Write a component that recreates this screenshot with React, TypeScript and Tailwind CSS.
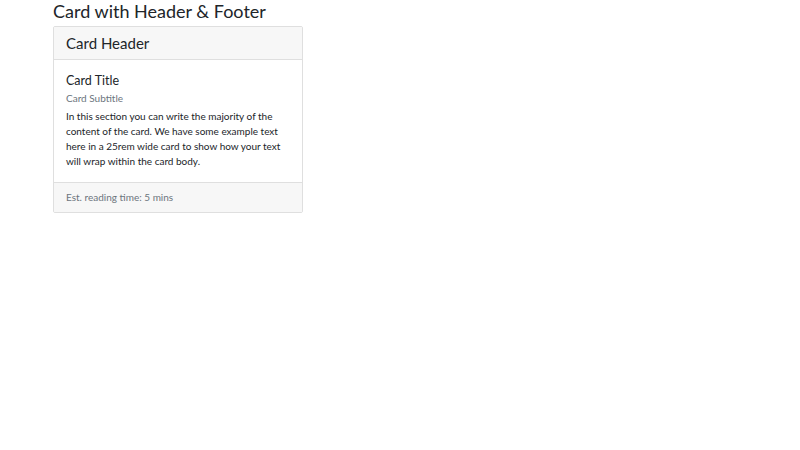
import React from 'react';

const App = () => {
  return (
    <div className="min-h-[450px] bg-white pl-[53px] pt-[1px] text-[#212529]" style={{ fontFamily: 'Lato, "Open Sans", sans-serif' }}>
      <h1 className="text-[18px] leading-[21px] mb-[4px]">Card with Header &amp; Footer</h1>
      <div className="w-[250px] border border-[#dfdfdf] rounded-[2px] overflow-hidden">
        <div className="h-[33px] bg-[#f7f7f7] border-b border-[#dfdfdf] px-[12px] flex items-center text-[15px]">Card Header</div>
        <div className="px-[12px] pt-[12px] pb-[13px]">
          <h2 className="text-[12.5px] leading-[17px]">Card Title</h2>
          <h3 className="text-[10px] leading-[14px] mt-[2px] text-[#6c757d]">Card Subtitle</h3>
          <p className="text-[10px] leading-[15px] mt-[4px]">
            In this section you can write the majority of the content of the card. We have some example text here in a 25rem wide card to show how your text will wrap within the card body.
          </p>
        </div>
        <div className="h-[30px] bg-[#f7f7f7] border-t border-[#dfdfdf] px-[12px] flex items-center text-[10px] text-[#6c757d]">Est. reading time: 5 mins</div>
      </div>
    </div>
  );
};

export default App;
